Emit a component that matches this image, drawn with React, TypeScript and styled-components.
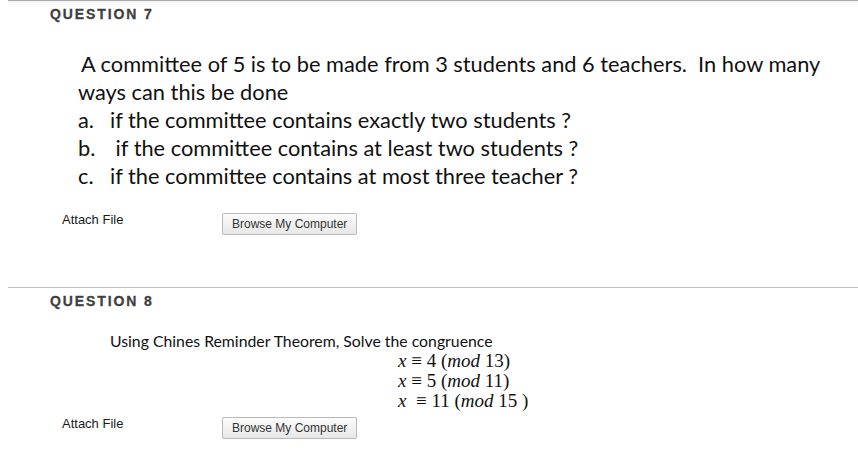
import styled, { createGlobalStyle } from "styled-components";

const GlobalStyle = createGlobalStyle`
  body {
    margin: 0;
    background: #ffffff;
    font-family: "Liberation Sans", Arial, sans-serif;
  }
`;

const Page = styled.div`
  width: 858px;
  height: 452px;
  overflow: hidden;
`;

const Section = styled.section<{ $pb: number; $top?: boolean }>`
  margin-left: 8px;
  border-top: 1px solid ${(p) => (p.$top ? "#a9a9a9" : "#c2c2c2")};
  background: ${(p) =>
    p.$top ? "linear-gradient(#f3f3f3, #ffffff 5px)" : "transparent"};
  padding-bottom: ${(p) => p.$pb}px;
`;

const Title = styled.h3`
  margin: 0;
  padding: 6px 0 0 42px;
  font-size: 14px;
  line-height: 15px;
  font-weight: bold;
  letter-spacing: 1.9px;
  color: #3f3f3f;
  -webkit-text-stroke: 0.3px #3f3f3f;
`;

const Prompt = styled.div`
  margin-top: 28px;
  padding-left: 70px;
  font-family: Lato, "Open Sans", sans-serif;
  font-size: 21.8px;
  line-height: 28px;
  color: #111;
  white-space: nowrap;
`;

const Line = styled.div<{ $indent?: number }>`
  padding-left: ${(p) => p.$indent || 0}px;
`;

const Item = styled.div`
  display: grid;
  grid-template-columns: 32px auto;
  white-space: pre;
`;

const Attach = styled.div<{ $mt: number }>`
  display: flex;
  align-items: flex-start;
  margin-top: ${(p) => p.$mt}px;
  padding-left: 54px;
`;

const Label = styled.span`
  width: 160px;
  margin-top: -1px;
  font-size: 13px;
  line-height: 15px;
  color: #1a1a1a;
`;

const Browse = styled.button`
  height: 22px;
  padding: 0 9px;
  font-family: "Liberation Sans", Arial, sans-serif;
  font-size: 12px;
  color: #333;
  background: linear-gradient(#fbfbfb, #e7e7e7);
  border: 1px solid #b9b9b9;
  border-radius: 2px;
`;

const Theorem = styled.div`
  margin-top: 22px;
  padding-left: 102px;
  font-family: Lato, "Open Sans", sans-serif;
  font-size: 15.8px;
  line-height: 20px;
  color: #111;
`;

const MathBlock = styled.div`
  padding-left: 390px;
  font-family: "Liberation Serif", "DejaVu Serif", serif;
  font-size: 19px;
  line-height: 20px;
  color: #111;
  white-space: pre;
`;

const V = styled.i`
  font-style: italic;
`;

const items = [
  ["a.", "if the committee contains exactly two students ?"],
  ["b.", " if the committee contains at least two students ?"],
  ["c.", "if the committee contains at most three teacher ?"],
];

const congruences = [
  ["x", " ≡ 4 (", "mod", " 13)"],
  ["x", " ≡ 5 (", "mod", " 11)"],
  ["x", "  ≡ 11 (", "mod", " 15 )"],
];

export default function App() {
  return (
    <Page>
      <GlobalStyle />
      <Section $top $pb={52}>
        <Title>QUESTION 7</Title>
        <Prompt>
          <Line $indent={3}>
            A committee of 5 is to be made from 3 students and 6 teachers.&nbsp; In how many
          </Line>
          <Line>ways can this be done</Line>
          {items.map(([k, t]) => (
            <Item key={k}>
              <span>{k}</span>
              <span>{t}</span>
            </Item>
          ))}
        </Prompt>
        <Attach $mt={23}>
          <Label>Attach File</Label>
          <Browse>Browse My Computer</Browse>
        </Attach>
      </Section>
      <Section $pb={10}>
        <Title>QUESTION 8</Title>
        <Theorem>Using Chines Reminder Theorem, Solve the congruence</Theorem>
        <MathBlock>
          {congruences.map(([x, a, m, b], i) => (
            <div key={i}>
              <V>{x}</V>
              {a}
              <V>{m}</V>
              {b}
            </div>
          ))}
        </MathBlock>
        <Attach $mt={6}>
          <Label>Attach File</Label>
          <Browse>Browse My Computer</Browse>
        </Attach>
      </Section>
    </Page>
  );
}
